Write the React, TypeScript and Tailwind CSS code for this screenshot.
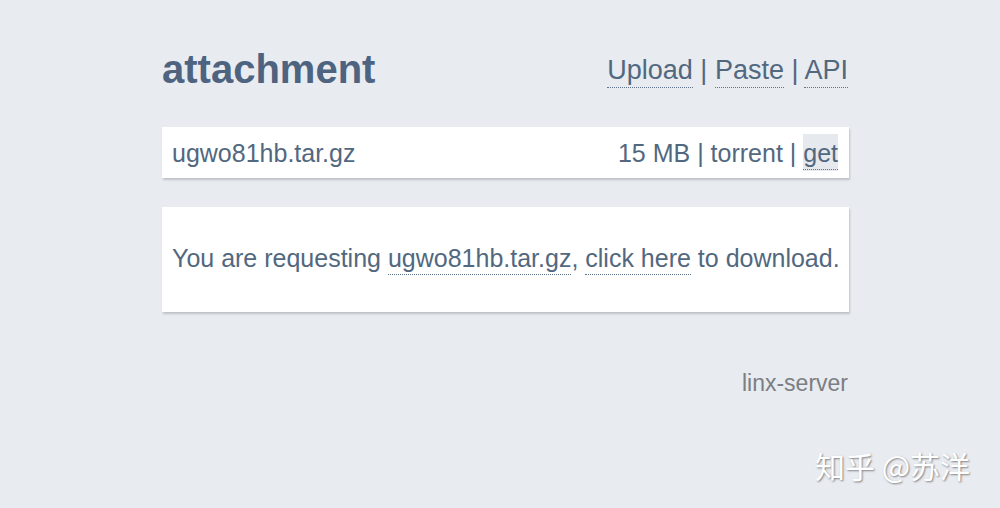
import React from "react";

const font = "font-['Liberation_Sans',Arial,sans-serif]";
const link = "border-b border-dotted border-[#5f7389] pb-[2px]";

const App = () => {
  return (
    <div className={`relative w-[1000px] h-[508px] bg-[#e8ebf0] overflow-hidden ${font} text-[#52687f]`}>
      <div className="ml-[162px] w-[687px] pt-[46px]">
        {/* header */}
        <div className="flex justify-between items-start">
          <h1 className="text-[40px] leading-[46px] font-bold text-[#4d6380]">attachment</h1>
          <nav className="mt-[9px] text-[27px] leading-[31px] mr-[1px]">
            <a className={link}>Upload</a> | <a className={link}>Paste</a> | <a className={link}>API</a>
          </nav>
        </div>

        {/* file row */}
        <div className="mt-[35px] h-[51px] bg-white shadow-[1px_2px_2px_rgba(0,0,0,0.18)] flex justify-between items-start pl-[10px] pr-[11px] pt-[12px] text-[25px] leading-[29px]">
          <span>ugwo81hb.tar.gz</span>
          <span className="flex items-start">
            15 MB | torrent |&nbsp;
            <a className="relative">
              <span className="absolute left-0 right-0 -top-[5px] h-[37px] bg-[#e6e9ee]"></span>
              <span className={`relative ${link}`}>get</span>
            </a>
          </span>
        </div>

        {/* download box */}
        <div className="mt-[29px] h-[105px] bg-white shadow-[1px_2px_2px_rgba(0,0,0,0.18)] pl-[10px] pt-[37px] text-[25px] leading-[29px]">
          You are requesting <a className={link}>ugwo81hb.tar.gz</a>, <a className={link}>click here</a> to download.
        </div>

        {/* footer */}
        <div className="mt-[58px] text-right text-[23px] leading-[27px] text-[#7b7e82] pr-[1px]">linx-server</div>
      </div>

      {/* watermark */}
      <div className="absolute left-[815px] top-[447px] text-[30px] leading-[36px] text-white font-['Noto_Sans_CJK_SC',sans-serif] [text-shadow:1px_1px_2px_rgba(0,0,0,0.45)]">
        知乎 @苏洋
      </div>
    </div>
  );
};

export default App;
